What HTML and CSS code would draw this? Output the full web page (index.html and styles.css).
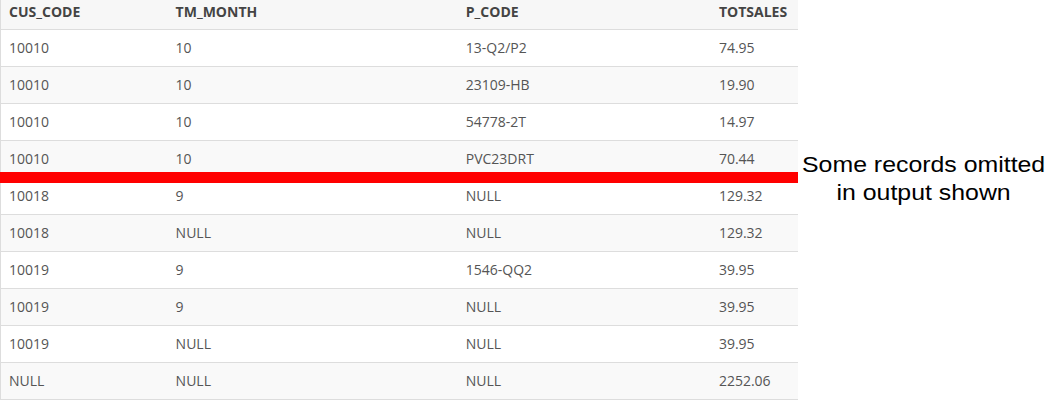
FILE: index.html
```html
<!DOCTYPE html>
<html>
<head>
<meta charset="utf-8">
<link rel="stylesheet" href="styles.css">
</head>
<body>
<div class="page">
  <div class="table-wrap">
    <table class="results">
      <colgroup>
        <col class="c1"><col class="c2"><col class="c3"><col class="c4">
      </colgroup>
      <thead>
        <tr><th>CUS_CODE</th><th>TM_MONTH</th><th>P_CODE</th><th>TOTSALES</th></tr>
      </thead>
      <tbody>
        <tr><td>10010</td><td>10</td><td>13-Q2/P2</td><td>74.95</td></tr>
        <tr><td>10010</td><td>10</td><td>23109-HB</td><td>19.90</td></tr>
        <tr><td>10010</td><td>10</td><td>54778-2T</td><td>14.97</td></tr>
        <tr><td>10010</td><td>10</td><td>PVC23DRT</td><td>70.44</td></tr>
        <tr><td>10018</td><td>9</td><td>NULL</td><td>129.32</td></tr>
        <tr><td>10018</td><td>NULL</td><td>NULL</td><td>129.32</td></tr>
        <tr><td>10019</td><td>9</td><td>1546-QQ2</td><td>39.95</td></tr>
        <tr><td>10019</td><td>9</td><td>NULL</td><td>39.95</td></tr>
        <tr><td>10019</td><td>NULL</td><td>NULL</td><td>39.95</td></tr>
        <tr><td>NULL</td><td>NULL</td><td>NULL</td><td>2252.06</td></tr>
      </tbody>
    </table>
    <div class="cut"></div>
  </div>
  <div class="note"><div class="note-text">Some records omitted<br>in output shown</div></div>
</div>
</body>
</html>
```
FILE: styles.css
```css
html, body {
  margin: 0;
  padding: 0;
  background: #fff;
}
.page {
  display: flex;
  align-items: flex-start;
}
.table-wrap {
  position: relative;
  width: 798px;
  flex: none;
}
.results {
  width: 798px;
  border-collapse: collapse;
  table-layout: fixed;
  font-family: "Open Sans", sans-serif;
  font-size: 14px;
  color: #555;
  border-left: 1px solid #ddd;
}
.c1 { width: 167px; }
.c2 { width: 290px; }
.c3 { width: 253px; }
.c4 { width: 87px; }
.results th {
  text-align: left;
  font-weight: bold;
  color: #444;
  background: #f7f7f7;
  height: 29px;
  padding: 0 8px 5px;
  box-sizing: border-box;
  border-bottom: 1px solid #ddd;
  white-space: nowrap;
}
.results td {
  height: 37px;
  padding: 0 8px;
  box-sizing: border-box;
  border-bottom: 1px solid #ddd;
  white-space: nowrap;
}
.results tbody tr:nth-child(even) td {
  background: #f9f9f9;
}
.cut {
  position: absolute;
  left: 0;
  top: 172px;
  width: 798px;
  height: 11px;
  background: #ff0000;
}
.note {
  width: 252px;
  margin-top: 151px;
  display: flex;
  justify-content: center;
}
.note-text {
  font-family: "Liberation Sans", Arial, sans-serif;
  font-size: 22px;
  line-height: 28px;
  color: #000;
  text-align: center;
  white-space: nowrap;
  transform: scaleX(1.13);
}
```
